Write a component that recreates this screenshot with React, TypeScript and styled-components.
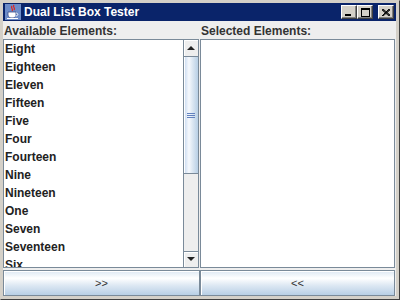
import React from 'react';
import styled, {createGlobalStyle} from 'styled-components';

const items = [
    'Eight', 'Eighteen', 'Eleven', 'Fifteen', 'Five', 'Four', 'Fourteen',
    'Nine', 'Nineteen', 'One', 'Seven', 'Seventeen', 'Six', 'Sixteen',
];

const GlobalStyle = createGlobalStyle`
  html, body {
    margin: 0;
    padding: 0;
    background: #d4d0c8;
  }
  * {
    box-sizing: border-box;
  }
`;

const Frame = styled.div`
  width: 400px;
  height: 300px;
  background: #d4d0c8;
  border: 1px solid #d4d0c8;
  border-right-color: #404040;
  border-bottom-color: #404040;
  padding: 2px 3px 3px 2px;
  display: flex;
  flex-direction: column;
  overflow: hidden;
`;

const TitleBar = styled.div`
  height: 18px;
  flex-shrink: 0;
  background: #0a246a;
  display: flex;
  align-items: center;
  padding: 0 2px 0 2px;
  gap: 3px;
`;

const Title = styled.span`
  flex: 1;
  color: #ffffff;
  font-family: "Liberation Sans", Arial, sans-serif;
  font-weight: bold;
  font-size: 12px;
  line-height: 18px;
`;

const WinButton = styled.div<{ $gap?: boolean }>`
  width: 16px;
  height: 14px;
  margin-left: ${p => (p.$gap ? '2px' : '-3px')};
  background: #d4d0c8;
  border: 1px solid;
  border-color: #ffffff #404040 #404040 #ffffff;
  box-shadow: inset -1px -1px 0 #808080;
  display: flex;
  align-items: center;
  justify-content: center;
`;

const Content = styled.div`
  flex: 1;
  min-height: 0;
  background: #eeeeee;
  display: flex;
  flex-direction: column;
  padding: 0 1px 0 0;
`;

const Columns = styled.div`
  flex: 1;
  min-height: 0;
  display: grid;
  grid-template-columns: 196px 1fr;
  grid-template-rows: minmax(0, 1fr);
  column-gap: 1px;
  overflow: hidden;
`;

const Column = styled.div`
  display: flex;
  flex-direction: column;
  min-height: 0;
`;

const Caption = styled.div`
  height: 18px;
  flex-shrink: 0;
  padding: 3px 0 0 1px;
  font-family: "Liberation Sans", Arial, sans-serif;
  font-weight: bold;
  font-size: 12px;
  color: #333333;
  line-height: 14px;
`;

const ListBox = styled.div`
  flex: 1;
  display: flex;
  background: #ffffff;
  border: 1px solid #7a8a99;
  min-height: 0;
  overflow: hidden;
`;

const ListBody = styled.div`
  flex: 1;
  overflow: hidden;
`;

const Row = styled.div`
  height: 18px;
  line-height: 18px;
  padding-left: 1px;
  font-family: "Liberation Sans", Arial, sans-serif;
  font-weight: bold;
  font-size: 12px;
  color: #222222;
  white-space: nowrap;
`;

const ScrollBar = styled.div`
  width: 15px;
  display: flex;
  flex-direction: column;
  background: #eeeeee;
  border-left: 1px solid #7a8a99;
`;

const ArrowButton = styled.div<{ $down?: boolean }>`
  height: 16px;
  flex-shrink: 0;
  background: #eeeeee;
  border-top: ${p => (p.$down ? '1px solid #7a8a99' : '0')};
  box-shadow: inset 1px 1px 0 #ffffff;
  display: flex;
  align-items: center;
  justify-content: center;
`;

const Track = styled.div`
  flex: 1;
  min-height: 0;
  display: flex;
  flex-direction: column;
  border-top: 1px solid #7a8a99;
  background: #eeeeee;
`;

const Thumb = styled.div`
  height: 117px;
  border-bottom: 1px solid #7a8a99;
  background: linear-gradient(to right, #c6d8ef 0%, #f6f9fd 35%, #dde8f3 60%, #b8cfe5 100%);
  box-shadow: inset 1px 0 0 #ffffff;
  display: flex;
  align-items: center;
  justify-content: center;
`;

const ButtonRow = styled.div`
  height: 28px;
  flex-shrink: 0;
  display: grid;
  grid-template-columns: 197px 1fr;
  padding-top: 2px;
`;

const PushButton = styled.div`
  border: 1px solid #7a8a99;
  background: linear-gradient(to bottom, #dde8f3 0%, #ffffff 30%, #dde8f3 60%, #b8cfe5 100%);
  box-shadow: inset 1px 1px 0 #ffffff;
  display: flex;
  align-items: center;
  justify-content: center;
  font-family: "Liberation Sans", Arial, sans-serif;
  font-size: 11px;
  color: #333333;
`;

const JavaIcon = () => (
    <svg width="16" height="16" viewBox="0 0 16 16">
        <rect x="0" y="0" width="16" height="16" fill="#6d8cc8"/>
        <path d="M7 2 C5 4 9 5 7 7 M9 1 C7 3 11 4 9 6" stroke="#e2231a" strokeWidth="1.2" fill="none"/>
        <path d="M3 8 H11 V11 C11 13 9 14 7 14 C5 14 3 13 3 11 Z" fill="#ffffff" stroke="#3b4f8a" strokeWidth="0.8"/>
        <path d="M11 9 C13.5 9 13.5 12 10.5 12" stroke="#ffffff" strokeWidth="1" fill="none"/>
        <rect x="2" y="14" width="11" height="1" fill="#ffffff"/>
    </svg>
);

const Minimize = () => (
    <svg width="8" height="7" viewBox="0 0 8 7"><rect x="0" y="5" width="6" height="2" fill="#000"/></svg>
);

const Maximize = () => (
    <svg width="9" height="9" viewBox="0 0 9 9">
        <rect x="0.5" y="0.5" width="8" height="8" fill="none" stroke="#000"/>
        <rect x="0" y="0" width="9" height="2" fill="#000"/>
    </svg>
);

const Close = () => (
    <svg width="8" height="7" viewBox="0 0 8 7">
        <path d="M0 0 L8 7 M1 0 L8 6 M0 1 L7 7 M8 0 L0 7 M7 0 L0 7 M8 1 L1 7" stroke="#000" strokeWidth="0.9"/>
    </svg>
);

const UpArrow = () => (
    <svg width="8" height="5" viewBox="0 0 8 5"><path d="M4 0 L8 4 L0 4 Z" fill="#222"/></svg>
);

const DownArrow = () => (
    <svg width="8" height="5" viewBox="0 0 8 5"><path d="M0 0 L8 0 L4 4 Z" fill="#222"/></svg>
);

const Grip = () => (
    <svg width="8" height="5" viewBox="0 0 8 5">
        <rect x="0" y="0" width="8" height="1" fill="#6382bf"/>
        <rect x="0" y="2" width="8" height="1" fill="#6382bf"/>
        <rect x="0" y="4" width="8" height="1" fill="#6382bf"/>
    </svg>
);

const App = () => {
    return (
        <>
            <GlobalStyle/>
            <Frame>
                <TitleBar>
                    <JavaIcon/>
                    <Title>Dual List Box Tester</Title>
                    <WinButton><Minimize/></WinButton>
                    <WinButton><Maximize/></WinButton>
                    <WinButton $gap><Close/></WinButton>
                </TitleBar>
                <Content>
                    <Columns>
                        <Column>
                            <Caption>Available Elements:</Caption>
                            <ListBox>
                                <ListBody>
                                    {items.map(item => <Row key={item}>{item}</Row>)}
                                </ListBody>
                                <ScrollBar>
                                    <ArrowButton><UpArrow/></ArrowButton>
                                    <Track>
                                        <Thumb><Grip/></Thumb>
                                    </Track>
                                    <ArrowButton $down><DownArrow/></ArrowButton>
                                </ScrollBar>
                            </ListBox>
                        </Column>
                        <Column>
                            <Caption>Selected Elements:</Caption>
                            <ListBox>
                                <ListBody/>
                            </ListBox>
                        </Column>
                    </Columns>
                    <ButtonRow>
                        <PushButton>&gt;&gt;</PushButton>
                        <PushButton>&lt;&lt;</PushButton>
                    </ButtonRow>
                </Content>
            </Frame>
        </>
    );
};

export default App;
